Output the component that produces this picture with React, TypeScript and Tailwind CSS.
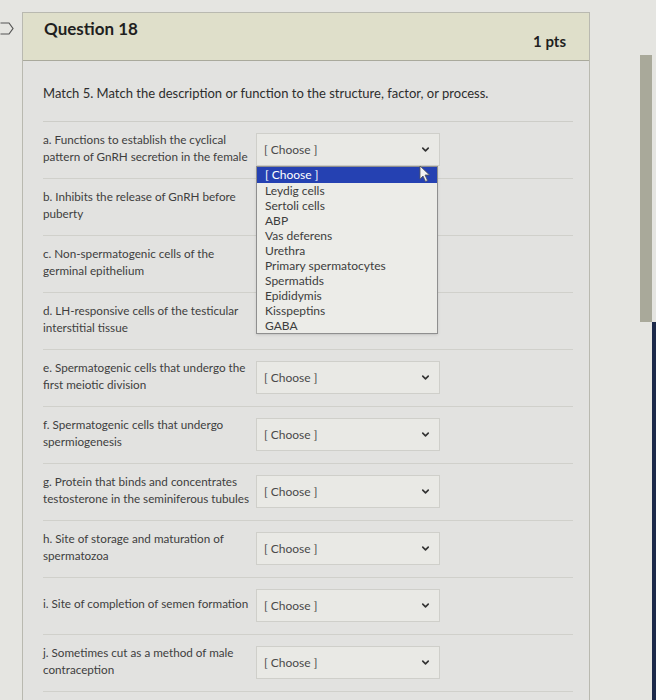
import { ChevronDown } from "lucide-react"

const rows = [
  { label: "a. Functions to establish the cyclical pattern of GnRH secretion in the female", open: true },
  { label: "b. Inhibits the release of GnRH before puberty", hidden: true },
  { label: "c. Non-spermatogenic cells of the germinal epithelium", hidden: true },
  { label: "d. LH-responsive cells of the testicular interstitial tissue", hidden: true },
  { label: "e. Spermatogenic cells that undergo the first meiotic division" },
  { label: "f. Spermatogenic cells that undergo spermiogenesis" },
  { label: "g. Protein that binds and concentrates testosterone in the seminiferous tubules" },
  { label: "h. Site of storage and maturation of spermatozoa" },
  { label: "i. Site of completion of semen formation" },
  { label: "j. Sometimes cut as a method of male contraception" },
]

const options = [
  "Leydig cells",
  "Sertoli cells",
  "ABP",
  "Vas deferens",
  "Urethra",
  "Primary spermatocytes",
  "Spermatids",
  "Epididymis",
  "Kisspeptins",
  "GABA",
]

function Select({ open, hidden }: { open?: boolean; hidden?: boolean }) {
  // rows b-d sit under the open list, so their boxes aren't drawn
  if (hidden) return <div className="w-[184px] h-[33px] shrink-0" />

  return (
    <div className="relative w-[184px] h-[33px] shrink-0 border border-[#cfcfca] bg-[#e9e9e5] flex items-center justify-between pl-[7px] pr-[8px]">
      <span className="text-[12px] text-[#4a4a4a]">[ Choose ]</span>
      <ChevronDown className="w-[11px] h-[11px] text-[#333]" strokeWidth={3.5} />
      {open && (
        <div className="absolute left-[-1px] top-[32px] w-[182px] z-10 border border-[#8f8f8f] bg-[#ecece8] shadow-sm text-[12px] text-[#3d3d3d] leading-[15px]">
          <div className="h-[16px] bg-[#2541b2] text-white px-[8px] leading-[16px] relative">
            [ Choose ]
            <svg className="absolute right-[6px] top-[-2px]" width="12" height="18" viewBox="0 0 12 18">
              <path d="M1 1 L1 14 L4 11 L6.5 16.5 L8.5 15.5 L6 10 L10.5 10 Z" fill="#f4f4f4" stroke="#555" strokeWidth="0.8" />
            </svg>
          </div>
          {options.map((o) => (
            <div key={o} className="px-[8px] h-[15px]">
              {o}
            </div>
          ))}
        </div>
      )}
    </div>
  )
}

export default function App() {
  return (
    <div className="relative w-[656px] h-[700px] overflow-hidden bg-[#e5e5e1] font-['Lato','Open_Sans',sans-serif] text-[#3a3a3a]">
      <div className="absolute left-0 top-[22px] w-[14px] h-[13px]">
        <svg width="14" height="13" viewBox="0 0 14 13">
          <path d="M0.5 1 H9 L13 6.5 L9 12 H0.5" fill="none" stroke="#555" strokeWidth="1.2" />
        </svg>
      </div>

      <div className="absolute right-[4px] top-[55px] w-[12px] h-[267px] bg-[#a9a99a]" />
      <div className="absolute right-0 top-[322px] w-[4px] h-[378px] bg-[#1d2a4a]" />

      <div className="ml-[22px] pt-[12px] w-[568px]">
        <div className="border border-[#b9b9b0] border-b-0 bg-[#e2e2e0]">
          <div className="h-[48px] bg-[#dfdfca] border-b border-[#a9a99c] flex justify-between items-start px-[21px]">
            <h2 className="text-[17px] font-bold text-[#1f1f1f] pt-[3px]">Question 18</h2>
            <span className="text-[15px] font-bold text-[#1f1f1f] pt-[17px] pr-[2px]">1 pts</span>
          </div>
          <div className="pl-[20px] pr-[16px] pb-[40px]">
            <p className="text-[13px] text-[#2d2d2d] pt-[23px] pb-[17px] border-b border-[#cdcdc8]">
              Match 5. Match the description or function to the structure, factor, or process.
            </p>
            {rows.map((r) => (
              <div key={r.label} className="flex items-center h-[57px] border-b border-[#d0d0cb]">
                <div className="w-[213px] shrink-0 text-[11.7px] leading-[17px] text-[#3e3e3e] pr-[1px] pb-[4px]">{r.label}</div>
                <Select open={r.open} hidden={r.hidden} />
              </div>
            ))}
          </div>
        </div>
      </div>
    </div>
  )
}
